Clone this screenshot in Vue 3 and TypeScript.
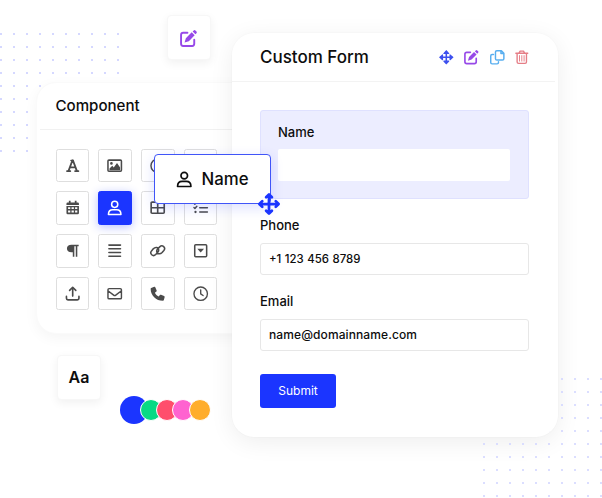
<script setup lang="ts">
import { h, type FunctionalComponent } from 'vue'

type Shape = [tag: string, attrs: Record<string, string | number>]

const line = (d: string, w = 1.6): Shape => ['path', {
  d, fill: 'none', stroke: 'currentColor', 'stroke-width': w, 'stroke-linecap': 'round', 'stroke-linejoin': 'round',
}]
const fill = (d: string): Shape => ['path', { d, fill: 'currentColor', 'fill-rule': 'evenodd' }]

// All glyphs are drawn on a 16 x 16 grid.
const glyphs: Record<string, Shape[]> = {
  font: [line('M3.6 13.6 7.7 2.6h.6l4.1 11M5.2 9.8h5.6', 1.9), line('M2 13.7h3.6M10.4 13.7H14M6.3 2.6h2', 1.7)],
  image: [line('M2 2.2h12q1 0 1 1v9.6q0 1-1 1H2q-1 0-1-1V3.2q0-1 1-1Z', 1.6), fill('M2.6 12.8V11l2.9-2.9L7 9.8l3.4-4.5L13.6 10v2.8ZM3.2 5.6a1.4 1.4 0 1 0 2.8 0a1.4 1.4 0 1 0-2.8 0')],
  radio: [line('M15 8A7 7 0 1 1 1 8a7 7 0 0 1 14 0Z', 1.5)],
  calendar: [fill('M4 .8h1.8v1.7h4.4V.8H12v1.7h1.2q1.3 0 1.3 1.3v1.4h-13V3.8q0-1.3 1.3-1.3H4ZM1.5 6.2h13v7.3q0 1.3-1.3 1.3H2.8q-1.3 0-1.3-1.3ZM3.2 7.5v1.9h2.3V7.5Zm3.6 0v1.9h2.4V7.5Zm3.7 0v1.9h2.3V7.5ZM3.2 11v2h2.3v-2Zm3.6 0v2h2.4v-2Zm3.7 0v2h2.3v-2Z')],
  user: [line('M11.2 4.5a3.2 3.2 0 1 1-6.4 0a3.2 3.2 0 0 1 6.4 0ZM1.5 15c0-3.3 2.2-4.9 4.5-4.9h4c2.3 0 4.5 1.6 4.5 4.9Z', 1.6)],
  table: [line('M2.2 2.2h11.6q1 0 1 1v9.6q0 1-1 1H2.2q-1 0-1-1V3.2q0-1 1-1ZM1.2 8h13.6M8 2.2v11.6', 1.7)],
  checklist: [line('M7 3.5h8M7 8h8M7 12.5h8M1 3.3l1 1 2-2.3M1 7.8l1 1 2-2.3', 1.5), fill('M1.4 12.5a1.2 1.2 0 1 0 2.4 0a1.2 1.2 0 1 0-2.4 0')],
  paragraph: [fill('M6.8 1.7h7.4v1.7h-1.4v11h-1.6v-11H9.7v11H8.1V9.5H6.8Q2 9.2 2 5.6T6.8 1.7Z')],
  lines: [line('M2 2.2h12M2 6h12M2 9.9h12M2 13.8h12', 1.7)],
  link: [line('M8.8 5.2 6.9 4.8C5.4 4.5 4.5 5 3.4 6.1L1.6 8.2c-2.4 3 1.5 6.5 4.3 3.8l2.2-2.3c1.3-1.5 1.3-3.3-.1-4.5M7.2 10.8l1.9.4c1.5.3 2.4-.2 3.5-1.3l1.8-2.1c2.4-3-1.5-6.5-4.3-3.8L7.9 6.3c-1.3 1.5-1.3 3.3.1 4.5', 1.6)],
  dropdown: [line('M2.8 1.8h10.4q1 0 1 1v10.4q0 1-1 1H2.8q-1 0-1-1V2.8q0-1 1-1Z', 1.6), fill('M4.5 6h7L8 10Z')],
  upload: [line('M8 10.5V1.5M4.8 4.5 8 1.3l3.2 3.2M1.5 10.8v2q0 1.6 1.6 1.6h9.8q1.6 0 1.6-1.6v-2', 1.7)],
  mail: [line('M2.2 2.7h11.6q1.2 0 1.2 1.2v8.2q0 1.2-1.2 1.2H2.2Q1 13.3 1 12.1V3.9q0-1.2 1.2-1.2ZM1.3 5.2 6.9 9.5q1.1.8 2.2 0l5.6-4.3', 1.5)],
  phone: [fill('M1.2 2.1 4.4.9c.6-.2 1 .1 1.2.6l1.3 3.1c.2.5.1.9-.3 1.2L5.1 7.1c.9 2 2 3.1 3.9 3.9l1.3-1.6c.4-.4.8-.5 1.2-.3l3.1 1.3c.6.3.8.7.6 1.2l-.8 3c-.1.5-.4.7-.9.7C6.2 15.3.7 9.8.7 3c0-.5.1-.8.5-.9Z')],
  clock: [line('M15 8A7 7 0 1 1 1 8a7 7 0 0 1 14 0ZM8 4v4.2l2.5 1.7', 1.4)],
  move: [line('M8 2v12M2 8h12', 1.7), fill('M8 0l3.2 3.5q.4 1-.7 1H5.5q-1.1 0-.7-1ZM8 16l3.2-3.5q.4-1-.7-1H5.5q-1.1 0-.7 1ZM0 8l3.5-3.2q1-.4 1 .7v5q0 1.1-1 .7ZM16 8l-3.5-3.2q-1-.4-1 .7v5q0 1.1 1 .7Z')],
  dragMove: [line('M8 1.2v13.6M1.2 8h13.6M5.9 3.1 8 1l2.1 2.1M5.9 12.9 8 15l2.1-2.1M3.1 5.9 1 8l2.1 2.1M12.9 5.9 15 8l-2.1 2.1', 2)],
  edit: [line('M7 2.6H3Q1 2.6 1 4.6V13q0 2 2 2h8.4q2 0 2-2V9.2', 1.8), fill('M11 2.2 13.8 5 8.3 10.5l-4 1.3L5.5 7.8ZM11.9 1.5l1-1q.8-.8 1.6 0l1 1q.8.8 0 1.6l-1 1Z')],
  copy: [line('M7.5 .8h5l2.7 2.7v6q0 1.5-1.5 1.5H7.5Q6 11 6 9.5V2.3Q6 .8 7.5 .8ZM12 .9v3h3M3.8 5H2.3Q.8 5 .8 6.5v7.2q0 1.5 1.5 1.5h5.5q1.5 0 1.5-1.5v-.9', 1.6)],
  trash: [line('M1 3.2h14M2.5 3.4V13.5q0 1.7 1.7 1.7h7.6q1.7 0 1.7-1.7V3.4M4.7 3 6 .8h4L11.3 3', 1.6), line('M5.3 6v6.5M8 6v6.5M10.7 6v6.5', 1.1)],
}

const Icon: FunctionalComponent<{ name: string }> = (props) =>
  h('svg', { viewBox: '0 0 16 16', 'aria-hidden': 'true', overflow: 'visible' }, (glyphs[props.name] ?? []).map(([tag, attrs]) => h(tag, attrs)))
Icon.props = ['name']

const tools: string[] = [
  'font', 'image', 'radio', 'dropdown',
  'calendar', 'user', 'table', 'checklist',
  'paragraph', 'lines', 'link', 'dropdown',
  'upload', 'mail', 'phone', 'clock',
]
const actions: string[] = ['move', 'edit', 'copy', 'trash']
const fields = [
  { id: 'phone', label: 'Phone', value: '+1 123 456 8789' },
  { id: 'email', label: 'Email', value: 'name@domainname.com' },
]
const swatches: string[] = ['blue', 'green', 'red', 'pink', 'orange']
</script>

<template>
  <main class="stage">
    <div class="dots dots-left"></div>

    <section class="palette">
      <h2>Component</h2>
      <div class="tools">
        <span v-for="(tool, i) in tools" :key="i" class="tool" :class="{ active: tool === 'user' }">
          <Icon :name="tool" />
        </span>
      </div>
    </section>

    <section class="form-card">
      <header>
        <h1>Custom Form</h1>
        <div class="actions">
          <Icon v-for="action in actions" :key="action" :name="action" :class="action" />
        </div>
      </header>
      <div class="form-body">
        <div class="drop-zone">
          <span class="label">Name</span>
          <div class="blank"></div>
        </div>
        <div v-for="field in fields" :key="field.id" class="field" :class="field.id">
          <span class="label">{{ field.label }}</span>
          <div class="input"><span>{{ field.value }}</span></div>
        </div>
        <button type="button"><span>Submit</span></button>
      </div>
    </section>

    <div class="dots dots-right"></div>

    <div class="chip edit-chip"><Icon name="edit" /></div>
    <div class="chip type-chip"><span>Aa</span></div>
    <div class="swatches">
      <i v-for="color in swatches" :key="color" :class="color"></i>
    </div>

    <div class="dragged">
      <Icon name="user" />
      <span>Name</span>
      <Icon name="dragMove" class="handle" />
    </div>
  </main>
</template>

<style>
body {
  margin: 0;
  background: #fff;
}
</style>

<style scoped>
.stage {
  position: relative;
  width: 602px;
  height: 498px;
  overflow: hidden;
  background: #fff;
  color: #0d0d0d;
  font-family: Inter, "Liberation Sans", sans-serif;
  font-weight: 500;
}
.stage * {
  box-sizing: border-box;
}
svg {
  display: block;
  flex: none;
}
h1,
h2 {
  margin: 0;
  font-weight: 500;
}

.dots {
  position: absolute;
  width: 119px;
  height: 119px;
  background: conic-gradient(from 90deg at 11px 11px, #d5d8ff 90deg, transparent 0) -11px -11px / 13px 13px;
}
.dots-left {
  left: 0;
  top: 33px;
}
.dots-right {
  left: 483px;
  top: 378px;
  opacity: 0.85;
  clip-path: polygon(75px 0, 100% 0, 100% 100%, 0 100%, 0 60px, 60px 60px, 75px 46px);
}

.palette {
  position: absolute;
  left: 36px;
  top: 82px;
  width: 220px;
  height: 252px;
  padding: 0 0 0 3px;
  background: #fff;
  border: 1px solid #fafafa;
  border-radius: 20px;
  box-shadow: 0 4px 14px rgba(0, 0, 0, 0.045);
}
.palette h2 {
  height: 47px;
  padding: 0 0 0 15.5px;
  border-bottom: 1px solid #f1f1f1;
  font-size: 15.1px;
  line-height: 45px;
}
.tools {
  display: grid;
  grid-template-columns: repeat(4, 33.4px);
  grid-auto-rows: 33.4px;
  gap: 9.4px;
  padding: 18.6px 0 0 15.7px;
}
.tool {
  display: flex;
  align-items: center;
  justify-content: center;
  border: 1px solid #dedede;
  border-radius: 2.5px;
  background: #fff;
  color: #4b4b4b;
}
.tool svg {
  width: 15.4px;
  height: 15.4px;
}
.tool.active {
  border-color: #1b35ff;
  background: #1b35ff;
  color: #fff;
  box-shadow: 0 2px 10px rgba(27, 53, 255, 0.3);
}

.form-card {
  position: absolute;
  left: 232px;
  top: 33px;
  width: 326px;
  height: 404px;
  background: #fff;
  border-radius: 22px;
  box-shadow: 0 0 0 1px rgba(0, 0, 0, 0.012), 0 5px 24px rgba(0, 0, 0, 0.07);
}
.form-card header {
  display: flex;
  align-items: center;
  justify-content: space-between;
  height: 49px;
  margin-right: 3px;
  padding: 0 26px 0 28px;
  border-bottom: 1px solid #f3f3f3;
}
h1 {
  font-size: 17px;
  line-height: 20px;
}
.actions {
  display: flex;
  align-items: center;
  gap: 11px;
}
.actions svg {
  width: 14.6px;
  height: 14.6px;
}
.actions .move {
  color: #3d50ee;
}
.actions .edit,
.edit-chip {
  color: #9749e8;
}
.actions .copy {
  color: #58aeef;
}
.actions .trash {
  width: 13.6px;
  color: #e57d86;
}
.form-body {
  padding: 28px 29.5px 0 28px;
}
.drop-zone {
  height: 89px;
  padding: 13px 17.5px 0 17px;
  border: 1px solid #dfe1ff;
  border-radius: 3px;
  background: #ecedff;
}
.label {
  display: block;
  font-size: 13px;
  line-height: 16px;
}
.blank {
  height: 32px;
  margin-top: 9px;
  border-radius: 2px;
  background: #fff;
}
.field {
  margin-top: 18px;
}
.field.email {
  margin-top: 17.5px;
}
.input {
  display: flex;
  align-items: center;
  height: 32px;
  margin-top: 10px;
  padding: 0 8px;
  border: 1px solid #e7e7e7;
  border-radius: 3px;
  background: #fff;
}
.phone .input {
  font-size: 11.4px;
  word-spacing: 0.5px;
}
.email .input {
  font-size: 12px;
  letter-spacing: 0.1px;
}
button {
  display: block;
  width: 76px;
  height: 34px;
  margin: 23.5px 0 0;
  padding: 0;
  border: 0;
  border-radius: 3px;
  background: #1b35ff;
  color: #fff;
  font: 400 12px/34px Inter, "Liberation Sans", sans-serif;
}

.chip {
  position: absolute;
  display: flex;
  align-items: center;
  justify-content: center;
  width: 44px;
  height: 45px;
  border: 1px solid #f7f7f7;
  border-radius: 4px;
  background: #fff;
  box-shadow: 0 3px 10px rgba(0, 0, 0, 0.06);
}
.edit-chip {
  left: 167px;
  top: 15px;
  padding-top: 1px;
  padding-right: 1px;
}
.edit-chip svg {
  width: 17px;
  height: 17px;
}
.type-chip {
  left: 57px;
  top: 355px;
  padding-bottom: 1px;
  font-size: 16px;
  font-weight: 600;
}
.swatches {
  position: absolute;
  left: 120.4px;
  top: 396px;
  display: flex;
  align-items: center;
}
.swatches i {
  width: 22px;
  height: 22px;
  margin-left: -5.8px;
  border: 1.5px solid #fff;
  border-radius: 50%;
}
.swatches .blue {
  width: 28px;
  height: 28px;
  margin-left: 0;
  border: 0;
  background: #1b35ff;
}
.swatches .green {
  margin-left: -8.4px;
  background: #08d984;
}
.swatches .red {
  background: #ff4e6c;
}
.swatches .pink {
  background: #ff62d0;
}
.swatches .orange {
  background: #ffad2c;
}

.dragged {
  position: absolute;
  left: 154px;
  top: 154px;
  display: flex;
  align-items: center;
  gap: 9px;
  width: 117px;
  height: 50px;
  padding-left: 21px;
  border: 1px solid #4055f8;
  border-radius: 4px;
  background: #fff;
  box-shadow: 0 4px 13px rgba(27, 53, 255, 0.15);
  font-size: 16.8px;
}
.dragged svg {
  width: 16.5px;
  height: 16.5px;
}
.dragged .handle {
  position: absolute;
  right: -10px;
  bottom: -12px;
  width: 22px;
  height: 22px;
  color: #1b35ff;
}
</style>
